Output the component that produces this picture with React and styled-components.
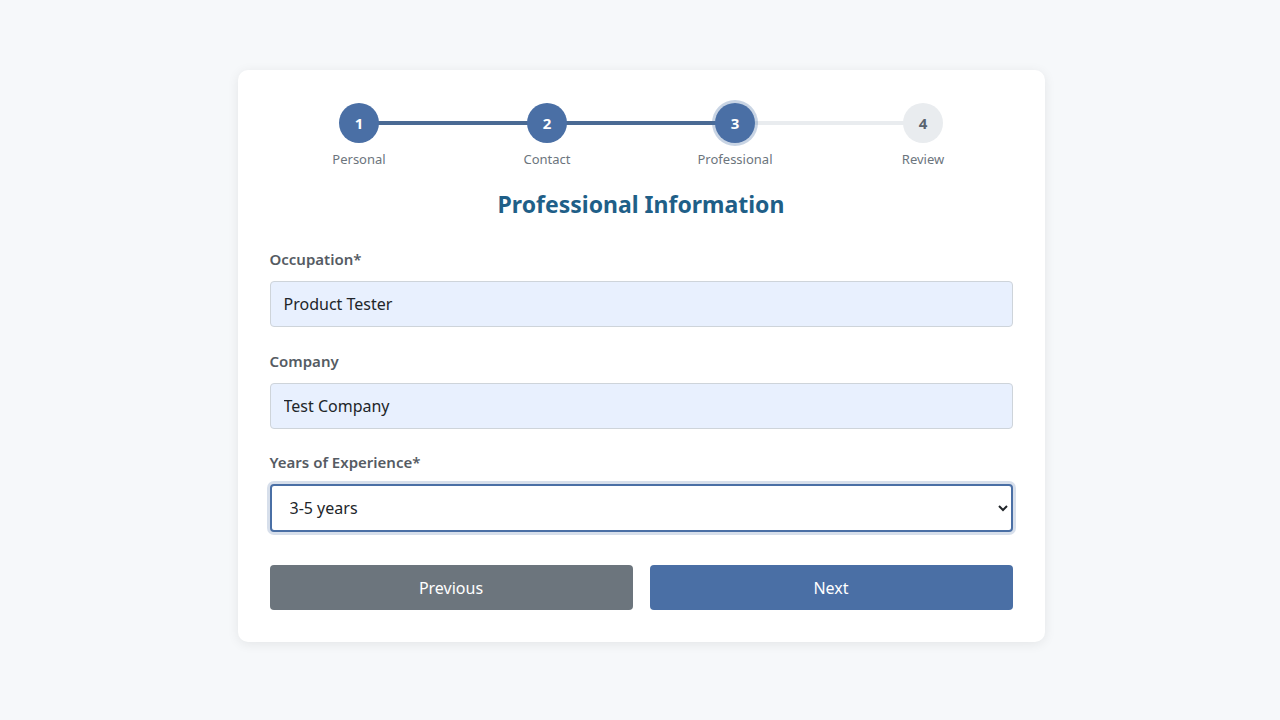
import React from "react";
import styled, { createGlobalStyle } from "styled-components";

const Global = createGlobalStyle`
  html, body { margin: 0; padding: 0; background: #f6f8fa; }
  body { font-family: "Noto Sans", "Open Sans", sans-serif; }
  * { box-sizing: border-box; }
`;

const Page = styled.div`
  min-height: 720px;
  display: flex;
  justify-content: center;
  padding: 70px 0 0 2px;
`;

const Card = styled.div`
  width: 807px;
  height: 572px;
  background: #fff;
  border-radius: 10px;
  box-shadow: 0 2px 12px rgba(0, 0, 0, 0.08);
  padding: 33px 32px 32px;
  display: flex;
  flex-direction: column;
`;

const Stepper = styled.div`
  position: relative;
  width: 752px;
  align-self: center;
  display: grid;
  grid-template-columns: repeat(4, 1fr);
`;

const Track = styled.div`
  position: absolute;
  top: 18px;
  left: 94px;
  right: 94px;
  height: 4px;
  background: #e9ecef;
`;

const Progress = styled.div`
  height: 100%;
  background: #4a6a94;
`;

const Step = styled.div`
  position: relative;
  display: flex;
  flex-direction: column;
  align-items: center;
`;

const Circle = styled.div`
  width: 40px;
  height: 40px;
  border-radius: 50%;
  display: flex;
  align-items: center;
  justify-content: center;
  font-size: 15px;
  font-weight: 700;
  background: ${(p) => (p.$done ? "#4a6fa5" : "#e9ecef")};
  color: ${(p) => (p.$done ? "#fff" : "#5a6470")};
  box-shadow: ${(p) => (p.$active ? "0 0 0 3px rgba(74,111,165,0.3)" : "none")};
`;

const StepLabel = styled.div`
  margin-top: 7px;
  font-size: 13px;
  color: #6c757d;
  line-height: 18px;
`;

const Title = styled.h2`
  margin: 20px 0 29px;
  text-align: center;
  font-size: 23px;
  line-height: 32px;
  font-weight: 700;
  color: #1f5f88;
`;

const Field = styled.div`
  display: flex;
  flex-direction: column;
  margin-bottom: ${(p) => p.$gap || 24}px;
`;

const Label = styled.label`
  font-size: 15px;
  font-weight: 600;
  color: #555b63;
  line-height: 20px;
  margin-bottom: 12px;
`;

const Input = styled.input`
  height: 46px;
  border: 1px solid #ced4da;
  border-radius: 4px;
  background: #e8f0fe;
  padding: 0 13px;
  font-family: inherit;
  font-size: 16px;
  color: #212529;
  outline: none;
`;

const Select = styled.select`
  height: 48px;
  border: 2px solid #4a6fa5;
  border-radius: 4px;
  background: #fff;
  padding: 0 10px 0 14px;
  font-family: inherit;
  font-size: 16px;
  color: #212529;
  outline: none;
  box-shadow: 0 0 0 3px rgba(74, 111, 165, 0.22);
`;

const Buttons = styled.div`
  display: grid;
  grid-template-columns: 1fr 1fr;
  gap: 17px;
  margin-top: 9px;
`;

const Button = styled.button`
  height: 45px;
  border: none;
  border-radius: 4px;
  font-family: inherit;
  font-size: 16px;
  color: #fff;
  background: ${(p) => (p.$primary ? "#4a6fa5" : "#6c757d")};
  cursor: pointer;
`;

const steps = ["Personal", "Contact", "Professional", "Review"];

export default function App() {
  const current = 3;
  return (
    <Page>
      <Global />
      <Card>
        <Stepper>
          <Track>
            <Progress style={{ width: `${((current - 1) / (steps.length - 1)) * 100}%` }} />
          </Track>
          {steps.map((s, i) => (
            <Step key={s}>
              <Circle $done={i + 1 <= current} $active={i + 1 === current}>
                {i + 1}
              </Circle>
              <StepLabel>{s}</StepLabel>
            </Step>
          ))}
        </Stepper>
        <Title>Professional Information</Title>
        <Field>
          <Label>Occupation*</Label>
          <Input defaultValue="Product Tester" />
        </Field>
        <Field $gap={23}>
          <Label>Company</Label>
          <Input defaultValue="Test Company" />
        </Field>
        <Field>
          <Label>Years of Experience*</Label>
          <Select defaultValue="3-5">
            <option value="0-1">0-1 years</option>
            <option value="1-3">1-3 years</option>
            <option value="3-5">3-5 years</option>
            <option value="5+">5+ years</option>
          </Select>
        </Field>
        <Buttons>
          <Button>Previous</Button>
          <Button $primary>Next</Button>
        </Buttons>
      </Card>
    </Page>
  );
}
